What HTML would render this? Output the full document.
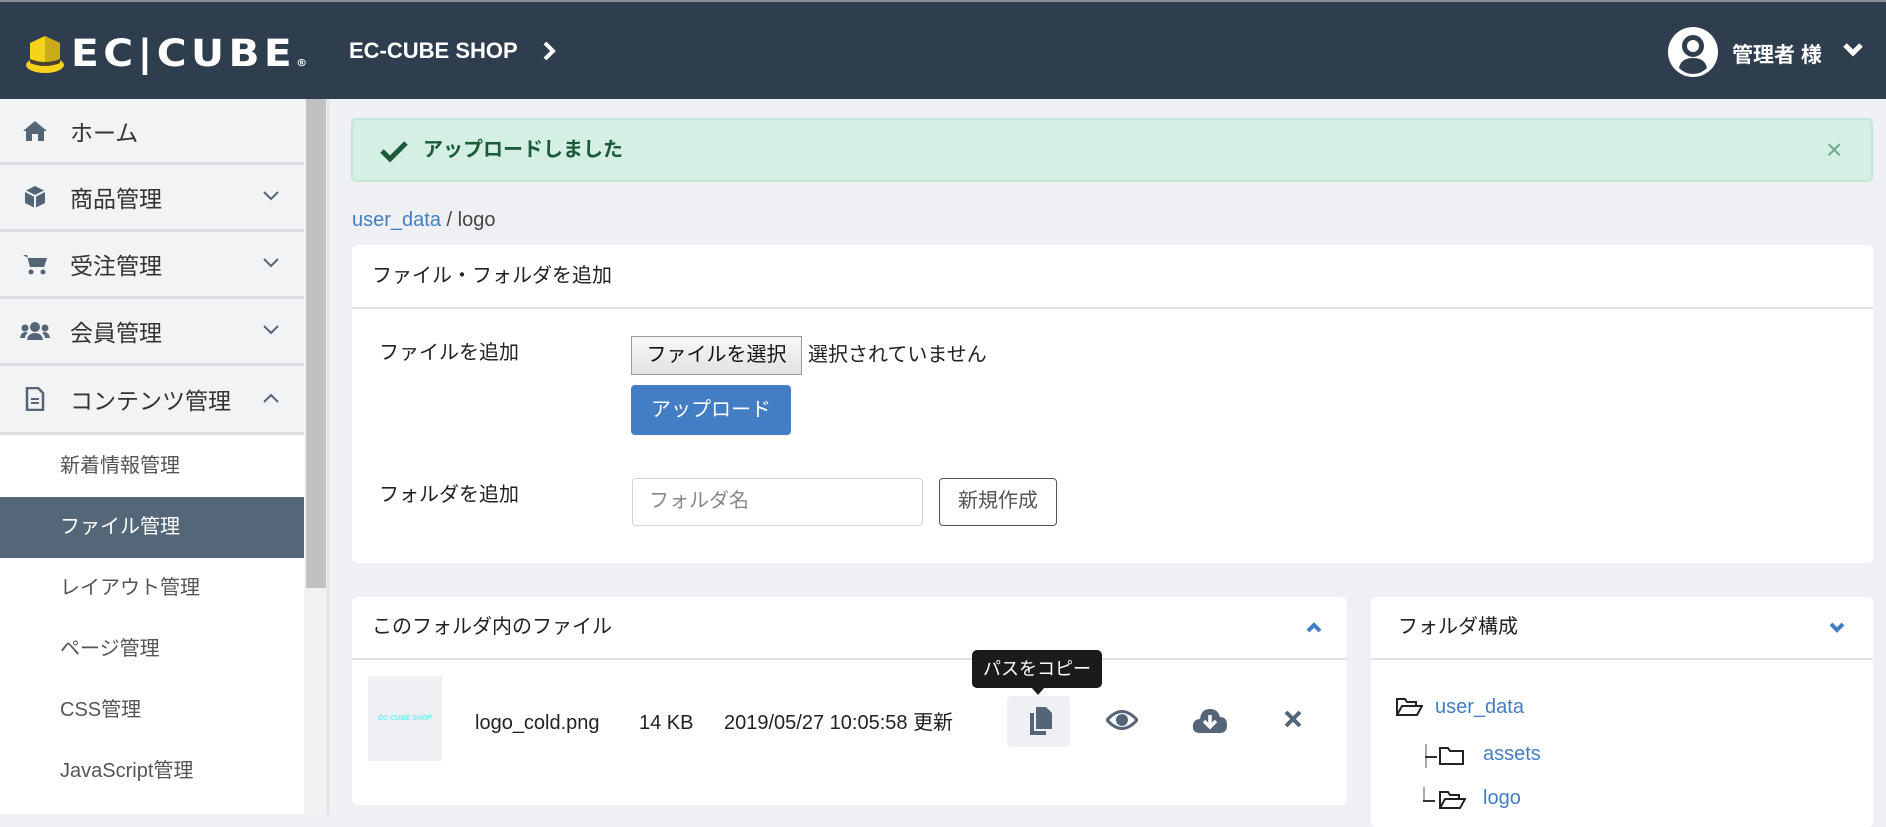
<!DOCTYPE html>
<html><head><meta charset="utf-8"><style>
*{box-sizing:border-box;margin:0;padding:0}
body{width:1886px;height:814px;overflow:hidden;background:#eef0f3;font-family:"Liberation Sans","Noto Sans CJK JP",sans-serif;position:relative;color:#333}
.a{position:absolute}
.hdr{left:0;top:0;width:1886px;height:99px;background:#2f3e4f;border-top:2px solid #8a8f95}
.side{left:0;top:99px;width:304px;height:715px;background:#fff}
.pi{position:absolute;left:0;width:304px;background:#f2f3f5;border-bottom:3px solid #dcdde2;color:#333;font-size:23px;display:flex;align-items:center}
.pi .ic{width:70px;display:flex;justify-content:center;padding-left:0}
.pi .chev{position:absolute;left:262px;top:50%;margin-top:-8px}
.si{position:absolute;left:0;width:304px;height:61px;font-size:20px;color:#555;padding-left:60px;line-height:61px}
.card{background:#fff;border-radius:6px;position:absolute}
.ch{position:absolute;left:0;right:0;top:0;border-bottom:2px solid #dfe1e4;font-size:20px;color:#222;padding-left:20px}
.t{font-size:20px;color:#222;white-space:nowrap;line-height:24px}
.ico{fill:#546578}
</style></head><body>
<div class="a hdr">
 <svg class="a" style="left:24px;top:31px" width="42" height="42" viewBox="0 0 42 42"><ellipse cx="21" cy="32" rx="19" ry="8" fill="#f6d31b"/><path d="M6 10 L21 3 L36 10 L36 30 Q21 36 6 30Z" fill="#f6d31b"/><path d="M21 3 L36 10 L36 30 Q28 33 21 33Z" fill="#c9ac1a"/><path d="M6 26 Q21 32 36 26 L36 30 Q21 36 6 30Z" fill="#4b4030"/></svg>
 <div class="a" style="left:71px;top:30px;color:#fff;font-weight:bold;font-size:37px;letter-spacing:4px;font-family:'DejaVu Sans',sans-serif;transform:scaleX(1.1);transform-origin:left">EC|CUBE<span style="font-size:10px;letter-spacing:0">®</span></div>
 <div class="a" style="left:349px;top:36px;color:#fff;font-weight:bold;font-size:22px">EC-CUBE SHOP</div>
 <svg class="a" style="left:541px;top:38px" width="16" height="22" viewBox="0 0 16 22"><path d="M4 3 L12 11 L4 19" stroke="#fff" stroke-width="4" fill="none"/></svg>
 <svg class="a" style="left:1667px;top:24px" width="52" height="52" viewBox="0 0 52 52"><circle cx="26" cy="26" r="25" fill="#fff"/><circle cx="26" cy="20" r="8.5" fill="none" stroke="#2f3e4f" stroke-width="5"/><path d="M12 42 Q14 32 26 32 Q38 32 40 42 Q34 48 26 48 Q18 48 12 42Z" fill="#2f3e4f"/></svg>
 <div class="a" style="left:1732px;top:37px;color:#fff;font-weight:bold;font-size:21px">管理者 様</div>
 <svg class="a" style="left:1842px;top:40px" width="22" height="16" viewBox="0 0 22 16"><path d="M3 3 L11 11 L19 3" stroke="#fff" stroke-width="5" fill="none"/></svg>
</div>
<div class="a side">
 <div class="pi" style="top:0;height:66px"><div class="ic"><svg width="26" height="22" viewBox="0 0 26 22"><path d="M13 1 L25 11 L22 11 L22 21 L16 21 L16 14 L10 14 L10 21 L4 21 L4 11 L1 11Z" fill="#546578"/></svg></div>ホーム</div>
 <div class="pi" style="top:66px;height:67px"><div class="ic"><svg width="22" height="24" viewBox="0 0 22 24"><path d="M11 1 L21 6 L21 18 L11 23 L1 18 L1 6Z" fill="#546578"/><path d="M1 6 L11 11 L21 6 M11 11 L11 23" stroke="#f2f3f5" stroke-width="2" fill="none"/></svg></div>商品管理<svg class="chev" width="18" height="14"><path d="M2 3 L9 10 L16 3" stroke="#546578" stroke-width="2" fill="none"/></svg></div>
 <div class="pi" style="top:133px;height:67px"><div class="ic"><svg width="26" height="22" viewBox="0 0 26 22"><path d="M1 2 L5 2 L8 14 L22 14 L25 5 L6 5" fill="#546578"/><path d="M5 2 L8 14 L22 14 L25 5 L6 5Z" fill="#546578"/><circle cx="9" cy="19" r="2.5" fill="#546578"/><circle cx="21" cy="19" r="2.5" fill="#546578"/></svg></div>受注管理<svg class="chev" width="18" height="14"><path d="M2 3 L9 10 L16 3" stroke="#546578" stroke-width="2" fill="none"/></svg></div>
 <div class="pi" style="top:200px;height:67px"><div class="ic"><svg width="30" height="20" viewBox="0 0 30 20"><circle cx="15" cy="6" r="5" fill="#546578"/><circle cx="5" cy="7" r="3.5" fill="#546578"/><circle cx="25" cy="7" r="3.5" fill="#546578"/><path d="M7 19 Q8 12 15 12 Q22 12 23 19Z M0 17 Q1 11 6 11 L8 12 Q5 14 5 17Z M30 17 Q29 11 24 11 L22 12 Q25 14 25 17Z" fill="#546578"/></svg></div>会員管理<svg class="chev" width="18" height="14"><path d="M2 3 L9 10 L16 3" stroke="#546578" stroke-width="2" fill="none"/></svg></div>
 <div class="pi" style="top:267px;height:69px"><div class="ic"><svg width="20" height="24" viewBox="0 0 20 24"><path d="M2 1 L13 1 L18 6 L18 23 L2 23Z" fill="none" stroke="#546578" stroke-width="2.5"/><path d="M6 12 L14 12 M6 16 L14 16" stroke="#546578" stroke-width="2"/></svg></div>コンテンツ管理<svg class="chev" width="18" height="14"><path d="M2 11 L9 4 L16 11" stroke="#546578" stroke-width="2" fill="none"/></svg></div>
 <div class="si" style="top:337px">新着情報管理</div>
 <div class="si" style="top:398px;background:#546778;color:#fff">ファイル管理</div>
 <div class="si" style="top:459px">レイアウト管理</div>
 <div class="si" style="top:520px">ページ管理</div>
 <div class="si" style="top:581px">CSS管理</div>
 <div class="si" style="top:642px">JavaScript管理</div>
</div>
<div class="a" style="left:304px;top:99px;width:23px;height:715px;background:#f1f1f1"></div>
<div class="a" style="left:306px;top:99px;width:20px;height:489px;background:#c1c1c1"></div>
<div class="a" style="left:327px;top:99px;width:2px;height:715px;background:#dfe0e3"></div>

<div class="a" style="left:351px;top:118px;width:1522px;height:64px;background:#d4efe3;border:2px solid #c3e8d6;border-radius:5px"></div>
<svg class="a" style="left:379px;top:139px" width="30" height="24" viewBox="0 0 30 24"><path d="M3 12 L11 20 L27 4" stroke="#1c5a3a" stroke-width="5" fill="none"/></svg>
<div class="a t" style="left:423px;top:138px;color:#1c5a3a;font-weight:bold">アップロードしました</div>
<div class="a" style="left:1826px;top:134px;color:#6fa88a;font-size:28px">×</div>

<div class="a t" style="left:352px;top:208px"><span style="color:#437ec4">user_data</span> <span style="color:#444">/ logo</span></div>

<div class="card" style="left:352px;top:245px;width:1521px;height:318px">
 <div class="ch" style="height:64px;line-height:62px">ファイル・フォルダを追加</div>
 <div class="a t" style="left:27px;top:96px">ファイルを追加</div>
 <div class="a" style="left:279px;top:91px;width:171px;height:39px;background:linear-gradient(#f7f7f7,#e2e2e2);border:1px solid #9a9a9a;font-size:20px;line-height:37px;text-align:center;color:#111">ファイルを選択</div>
 <div class="a t" style="left:456px;top:98px">選択されていません</div>
 <div class="a" style="left:279px;top:140px;width:160px;height:50px;background:#437ec4;border-radius:4px;color:#fff;font-size:20px;line-height:50px;text-align:center">アップロード</div>
 <div class="a t" style="left:27px;top:238px">フォルダを追加</div>
 <div class="a" style="left:280px;top:233px;width:291px;height:48px;border:1.5px solid #cfd3d8;border-radius:4px;color:#888;font-size:20px;line-height:45px;padding-left:16px">フォルダ名</div>
 <div class="a" style="left:587px;top:233px;width:118px;height:48px;border:1.5px solid #555;border-radius:4px;color:#555;font-size:20px;line-height:45px;text-align:center">新規作成</div>
</div>

<div class="card" style="left:352px;top:597px;width:995px;height:208px">
 <div class="ch" style="height:63px;line-height:60px">このフォルダ内のファイル</div>
 <svg class="a" style="left:953px;top:23px" width="18" height="14"><path d="M3 11 L9 5 L15 11" stroke="#437ec4" stroke-width="4" fill="none"/></svg>
 <div class="a" style="left:16px;top:79px;width:74px;height:85px;background:#eef0f3;color:#6ef0f5;font-size:7px;font-weight:bold;font-style:italic;line-height:85px;text-align:center;white-space:nowrap">EC-CUBE SHOP</div>
 <div class="a t" style="left:123px;top:114px">logo_cold.png</div>
 <div class="a t" style="left:287px;top:114px">14 KB</div>
 <div class="a t" style="left:372px;top:114px">2019/05/27 10:05:58 更新</div>
 <div class="a" style="left:655px;top:99px;width:63px;height:51px;background:#eef0f3;border-radius:4px"></div>
 <svg class="a" style="left:676px;top:109px" width="24" height="30" viewBox="0 0 24 30"><path d="M8 1 L18 1 L24 7 L24 23 L8 23Z" class="ico"/><path d="M2 7 L6 7 L6 25 L18 25 L18 29 L2 29Z" class="ico"/></svg>
 <svg class="a" style="left:754px;top:112px" width="32" height="22" viewBox="0 0 32 22"><path d="M1 11 Q16 -6 31 11 Q16 28 1 11Z" fill="none" stroke="#546578" stroke-width="3"/><circle cx="16" cy="11" r="6" class="ico"/></svg>
 <svg class="a" style="left:840px;top:109px" width="36" height="28" viewBox="0 0 36 28"><path d="M8 27 Q0 27 1 19 Q2 13 8 13 Q9 3 18 3 Q26 3 28 11 Q35 11 35 19 Q35 27 28 27Z" class="ico"/><path d="M18 9 L18 19 M12 15 L18 21 L24 15" stroke="#fff" stroke-width="3.5" fill="none"/></svg>
 <svg class="a" style="left:931px;top:112px" width="20" height="20" viewBox="0 0 20 20"><path d="M3 3 L17 17 M17 3 L3 17" stroke="#546578" stroke-width="4"/></svg>
</div>
<div class="a" style="left:972px;top:650px;width:130px;height:38px;background:#1b1b1b;border-radius:5px;color:#fff;font-size:18px;line-height:38px;text-align:center">パスをコピー</div>
<div class="a" style="left:1031px;top:687px;width:0;height:0;border-left:7px solid transparent;border-right:7px solid transparent;border-top:8px solid #1b1b1b"></div>

<div class="card" style="left:1371px;top:597px;width:502px;height:230px">
 <div class="ch" style="height:63px;line-height:60px;padding-left:27px">フォルダ構成</div>
 <svg class="a" style="left:457px;top:23px" width="18" height="14"><path d="M3 4 L9 10 L15 4" stroke="#437ec4" stroke-width="4" fill="none"/></svg>
 <svg class="a" style="left:25px;top:100px" width="27" height="20" viewBox="0 0 27 20"><path d="M1 18 L1 2 L9 2 L11 5 L20 5 L20 8 M1 18 L6 9 L26 9 L21 18Z" fill="none" stroke="#222" stroke-width="2"/></svg>
 <div class="a t" style="left:64px;top:98px;color:#437ec4">user_data</div>
 <div class="a" style="left:54px;top:147px;width:2px;height:24px;background:#aaa"></div>
 <div class="a" style="left:54px;top:159px;width:12px;height:2px;background:#333"></div>
 <svg class="a" style="left:68px;top:149px" width="26" height="20" viewBox="0 0 26 20"><path d="M1 18 L1 2 L9 2 L11 5 L24 5 L24 18Z" fill="none" stroke="#222" stroke-width="2"/></svg>
 <div class="a t" style="left:112px;top:145px;color:#437ec4">assets</div>
 <div class="a" style="left:52px;top:190px;width:2px;height:14px;background:#aaa"></div>
 <div class="a" style="left:52px;top:203px;width:12px;height:2px;background:#333"></div>
 <svg class="a" style="left:68px;top:193px" width="27" height="20" viewBox="0 0 27 20"><path d="M1 18 L1 2 L9 2 L11 5 L20 5 L20 8 M1 18 L6 9 L26 9 L21 18Z" fill="none" stroke="#222" stroke-width="2"/></svg>
 <div class="a t" style="left:112px;top:189px;color:#437ec4">logo</div>
</div>
</body></html>
